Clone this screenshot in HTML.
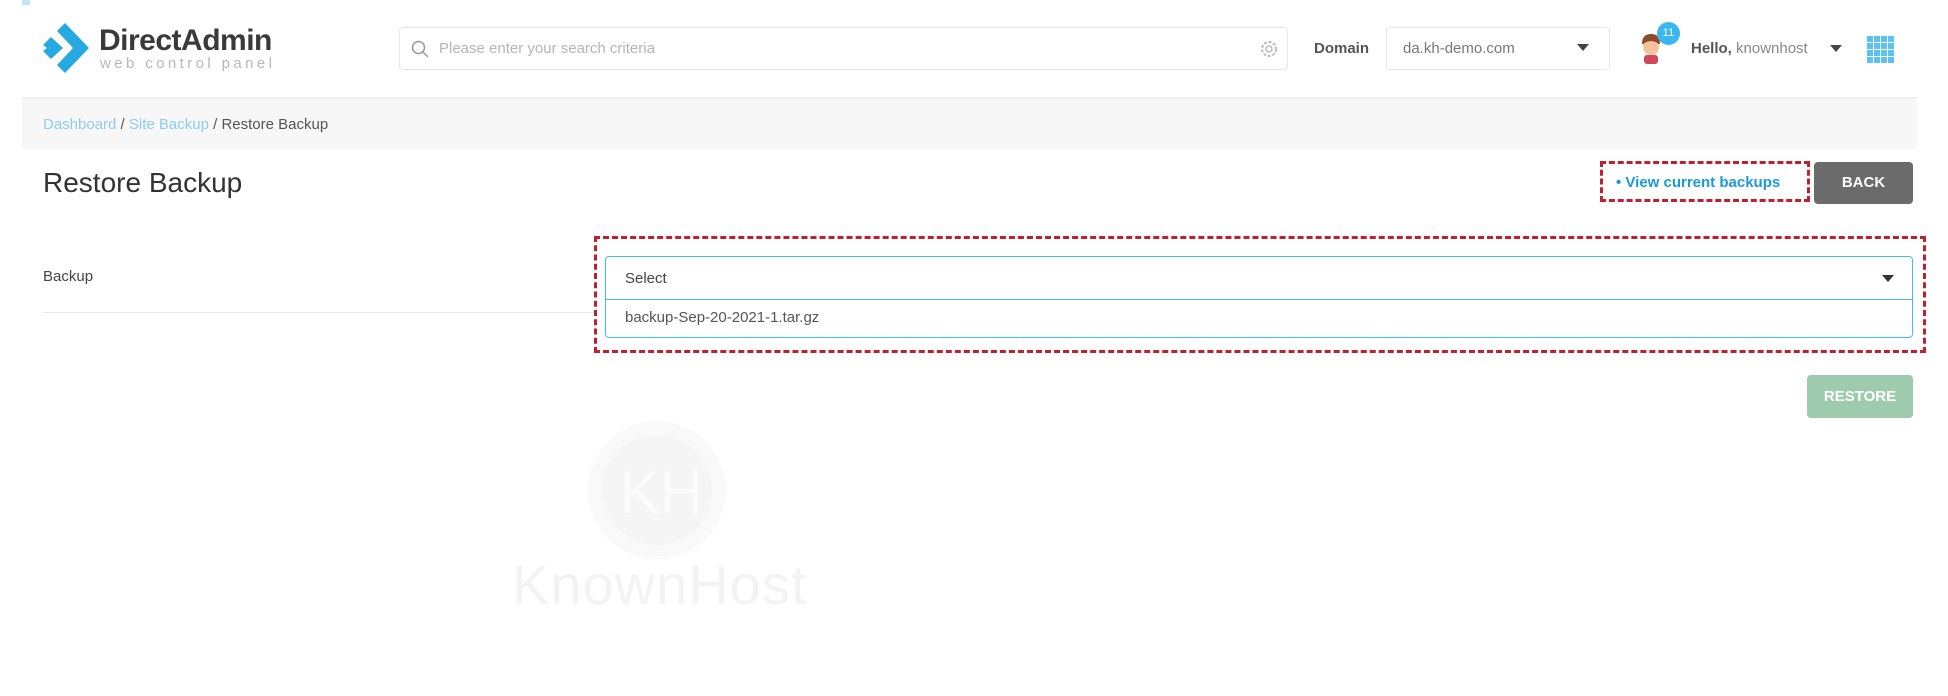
<!DOCTYPE html>
<html><head><meta charset="utf-8"><style>
*{box-sizing:border-box;margin:0;padding:0}
body{width:1948px;height:696px;background:#fff;font-family:"Liberation Sans",sans-serif;position:relative;overflow:hidden;color:#333}
.a{position:absolute}
</style></head><body>
<div class="a" style="left:22px;top:0;width:8px;height:5px;background:#bfe4f7"></div>
<!-- logo -->
<svg class="a" style="left:43px;top:23px" width="46" height="50" viewBox="0 0 46 50">
<polygon points="22,0 46,25 22,50 14,42 30,25 14,8" fill="#27a9e1"/>
<polygon points="8,14 20,25 8,36 0,28 4,25 0,22" fill="#27a9e1"/>
</svg>
<div class="a" style="left:99px;top:24px;font-size:30px;font-weight:bold;color:#3a3a3a;letter-spacing:-0.5px">DirectAdmin</div>
<div class="a" style="left:100px;top:55px;font-size:15px;color:#b8b8b8;letter-spacing:3.4px">web control panel</div>
<!-- search -->
<div class="a" style="left:399px;top:27px;width:889px;height:43px;border:1px solid #e6e6e6;border-radius:4px"></div>
<svg class="a" style="left:411px;top:40px" width="18" height="18" viewBox="0 0 18 18"><circle cx="7.5" cy="7.5" r="6" fill="none" stroke="#999" stroke-width="1.5"/><line x1="12" y1="12" x2="17" y2="17" stroke="#999" stroke-width="1.5"/></svg>
<div class="a" style="left:439px;top:40px;font-size:15px;color:#b5b5b5">Please enter your search criteria</div>
<svg class="a" style="left:1260px;top:40px" width="18" height="18" viewBox="0 0 18 18"><circle cx="9" cy="9" r="7" fill="none" stroke="#bbb" stroke-width="2" stroke-dasharray="3 1.6"/><circle cx="9" cy="9" r="3" fill="none" stroke="#bbb" stroke-width="1.5"/></svg>
<div class="a" style="left:1314px;top:40px;font-size:15px;font-weight:bold;color:#555">Domain</div>
<div class="a" style="left:1386px;top:27px;width:224px;height:43px;border:1px solid #e6e6e6;border-radius:4px"></div>
<div class="a" style="left:1403px;top:40px;font-size:15px;color:#777">da.kh-demo.com</div>
<div class="a" style="left:1577px;top:44px;border-left:6px solid transparent;border-right:6px solid transparent;border-top:7px solid #444"></div>
<!-- avatar -->
<svg class="a" style="left:1636px;top:30px" width="30" height="36" viewBox="0 0 30 36">
<path d="M6 14 Q6 4 15 4 Q24 4 24 14 Z" fill="#8b4a2a"/>
<ellipse cx="15" cy="17" rx="8" ry="8" fill="#f3c19a"/>
<path d="M7 13 Q10 6 22 10 L23 14 Q15 8 7 14Z" fill="#8b4a2a"/>
<rect x="8" y="25" width="14" height="9" rx="3" fill="#d0485a"/>
</svg>
<div class="a" style="left:1657px;top:22px;width:23px;height:23px;border-radius:50%;background:#3bb7f0;color:#fff;font-size:11px;text-align:center;line-height:23px">11</div>
<div class="a" style="left:1691px;top:40px;font-size:15px;color:#888"><b style="color:#555">Hello,</b> knownhost</div>
<div class="a" style="left:1830px;top:45px;border-left:6px solid transparent;border-right:6px solid transparent;border-top:7px solid #444"></div>
<div class="a" style="left:1867px;top:36px;width:27px;height:27px;display:grid;grid-template-columns:repeat(4,6px);gap:1px">
<i style="background:#5bc3f2"></i><i style="background:#5bc3f2"></i><i style="background:#5bc3f2"></i><i style="background:#5bc3f2"></i>
<i style="background:#5bc3f2"></i><i style="background:#5bc3f2"></i><i style="background:#5bc3f2"></i><i style="background:#5bc3f2"></i>
<i style="background:#5bc3f2"></i><i style="background:#5bc3f2"></i><i style="background:#5bc3f2"></i><i style="background:#5bc3f2"></i>
<i style="background:#5bc3f2"></i><i style="background:#5bc3f2"></i><i style="background:#5bc3f2"></i><i style="background:#5bc3f2"></i>
</div>
<!-- breadcrumb -->
<div class="a" style="left:22px;top:97px;width:1895px;height:52px;background:#f7f7f7;border-top:2px solid #efefef"></div>
<div class="a" style="left:43px;top:116px;font-size:15px;color:#555"><span style="color:#8fcdf0">Dashboard</span> / <span style="color:#8fcdf0">Site Backup</span> / Restore Backup</div>
<!-- title -->
<div class="a" style="left:43px;top:167px;font-size:28px;color:#333">Restore Backup</div>
<div class="a" style="left:1600px;top:161px;width:210px;height:41px;border:3px dashed #c01f30"></div>
<div class="a" style="left:1616px;top:174px;font-size:15px;font-weight:bold;color:#1a9ad6">• View current backups</div>
<div class="a" style="left:1814px;top:162px;width:99px;height:42px;background:#6b6b6b;border-radius:4px;color:#fff;font-weight:bold;font-size:15px;text-align:center;line-height:42px">BACK</div>
<!-- form -->
<div class="a" style="left:43px;top:268px;font-size:15px;color:#444">Backup</div>
<div class="a" style="left:43px;top:312px;width:551px;height:1px;background:#e8e8e8"></div>
<div class="a" style="left:594px;top:236px;width:1332px;height:117px;border:3px dashed #c01f30"></div>
<div class="a" style="left:605px;top:256px;width:1308px;height:82px;border:1px solid #3cc1ef;border-radius:4px"></div>
<div class="a" style="left:606px;top:299px;width:1306px;height:1px;background:#3cc1ef"></div>
<div class="a" style="left:625px;top:270px;font-size:15px;color:#444">Select</div>
<div class="a" style="left:1882px;top:275px;border-left:6px solid transparent;border-right:6px solid transparent;border-top:7px solid #333"></div>
<div class="a" style="left:625px;top:309px;font-size:15px;color:#555">backup-Sep-20-2021-1.tar.gz</div>
<div class="a" style="left:1807px;top:375px;width:106px;height:43px;background:#9ecbad;border-radius:4px;color:#fff;font-weight:bold;font-size:15px;text-align:center;line-height:43px">RESTORE</div>
<!-- watermark -->
<div class="a" style="left:588px;top:421px;width:138px;height:138px;border-radius:50%;border:14px solid #f9f9f9;background:#f5f5f5"></div>
<div class="a" style="left:620px;top:458px;font-size:60px;color:#fcfcfc">KH</div>
<div class="a" style="left:512px;top:552px;font-size:56px;color:#f3f3f3;letter-spacing:1px">KnownHost</div>
</body></html>
